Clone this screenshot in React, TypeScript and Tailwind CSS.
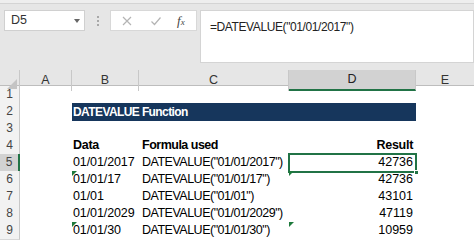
import React from "react";

const cols = "grid grid-cols-[20px_52px_67px_150px_127px_58px]";

function Tri() {
  return (
    <span className="absolute left-0 top-0 w-0 h-0 border-t-[5px] border-t-[#1e7a3c] border-r-[5px] border-r-transparent" />
  );
}

type Row = {
  n: number;
  b?: string;
  c?: string;
  d?: string;
  bold?: boolean;
  triB?: boolean;
  triD?: boolean;
  sel?: boolean;
  title?: boolean;
};

const rows: Row[] = [
  { n: 1 },
  { n: 2, title: true },
  { n: 3 },
  { n: 4, b: "Data", c: "Formula used", d: "Result", bold: true },
  { n: 5, b: "01/01/2017", c: 'DATEVALUE("01/01/2017")', d: "42736", sel: true },
  { n: 6, b: "01/01/17", c: 'DATEVALUE("01/01/17")', d: "42736", triB: true, triD: true },
  { n: 7, b: "01/01", c: 'DATEVALUE("01/01")', d: "43101" },
  { n: 8, b: "01/01/2029", c: 'DATEVALUE("01/01/2029")', d: "47119" },
  { n: 9, b: "01/01/30", c: 'DATEVALUE("01/01/30")', d: "10959", triB: true, triD: true },
];

export default function App() {
  return (
    <div
      className="w-[474px] h-[241px] overflow-hidden bg-white text-black"
      style={{ fontFamily: '"Liberation Sans", Arial, sans-serif' }}
    >
      {/* formula bar area */}
      <div className="h-[70px] bg-[#e6e6e6] flex flex-col">
        <div className="h-[4px] bg-[#eeeeee] border-b border-[#d4d4d4]" />
        <div className="flex items-start pt-[6px]">
          <div className="ml-[4px] w-[81px] h-[21px] bg-white border border-[#d0d0d0] flex items-center justify-between pl-[6px] pr-[4px]">
            <span className="text-[12.5px] text-[#333]">D5</span>
            <span className="w-0 h-0 border-l-[3px] border-r-[3px] border-t-[4px] border-l-transparent border-r-transparent border-t-[#666]" />
          </div>
          <div className="w-[25px] h-[21px] flex flex-col items-center justify-center gap-[2px]">
            <span className="w-[2px] h-[2px] bg-[#a8a8a8]" />
            <span className="w-[2px] h-[2px] bg-[#a8a8a8]" />
            <span className="w-[2px] h-[2px] bg-[#a8a8a8]" />
          </div>
          <div className="w-[87px] h-[21px] bg-white border border-[#d8d8d8] flex items-center">
            <svg width="12" height="12" viewBox="0 0 12 12" className="ml-[10px]">
              <path d="M2 2 L10 10 M10 2 L2 10" stroke="#b4b4b4" strokeWidth="1.2" fill="none" />
            </svg>
            <svg width="12" height="12" viewBox="0 0 12 12" className="ml-[17px]">
              <path d="M1.5 6.5 L4.5 9.5 L10.5 2.5" stroke="#b4b4b4" strokeWidth="1.2" fill="none" />
            </svg>
            <span
              className="ml-[15px] text-[13px] italic text-[#444] leading-none"
              style={{ fontFamily: '"Liberation Serif", "Times New Roman", serif' }}
            >
              f<span className="text-[9px]">x</span>
            </span>
          </div>
          <div className="ml-[3px] flex-1 h-[53px] bg-white border border-[#d4d4d4] pl-[9px] pt-[3px]">
            <span className="text-[12px] text-[#222] tracking-[-0.4px]">=DATEVALUE("01/01/2017")</span>
          </div>
        </div>
      </div>

      {/* column headers */}
      <div className={`${cols} h-[16px] bg-[#e6e6e6] border-b border-[#bdbdbd] text-[12.5px] text-[#333]`}>
        <div className="relative border-r border-[#c8c8c8]">
          <span className="absolute right-[2px] bottom-[2px] w-0 h-0 border-b-[10px] border-b-[#c4c4c4] border-l-[10px] border-l-transparent" />
        </div>
        <div className="flex items-center justify-center border-r border-[#c8c8c8]">A</div>
        <div className="flex items-center justify-center border-r border-[#c8c8c8]">B</div>
        <div className="flex items-center justify-center border-r border-[#c8c8c8]">C</div>
        <div className="flex items-center justify-center bg-[#d2d2d2] border-r border-[#c8c8c8] border-b-2 border-b-[#217346] text-[#222]">D</div>
        <div className="flex items-center justify-center">E</div>
      </div>

      {/* rows */}
      {rows.map((r) => (
        <div key={r.n} className={`${cols} h-[17px] text-[12.5px] leading-[17px]`}>
          <div
            className={`text-center text-[12px] text-[#444] border-b border-[#d8d8d8] ${
              r.sel ? "bg-[#d2d2d2] border-r-2 border-r-[#217346]" : "bg-[#f2f2f2] border-r border-r-[#c8c8c8]"
            }`}
          >
            {r.n}
          </div>
          <div />
          {r.title ? (
            <div className="col-span-3 bg-[#16365c] text-white text-[12px] font-bold pl-[1px] leading-[18px] tracking-[-0.6px]">
              DATEVALUE Function
            </div>
          ) : (
            <>
              <div className={`relative pl-[1px] whitespace-nowrap ${r.bold ? "font-bold tracking-[-0.3px]" : "tracking-[-0.1px]"}`}>
                {r.triB && <Tri />}
                {r.b}
              </div>
              <div className={`pl-[3px] whitespace-nowrap ${r.bold ? "font-bold tracking-[-0.5px]" : "tracking-[-0.5px]"}`}>{r.c}</div>
              <div className={`relative text-right pr-[3px] ${r.bold ? "font-bold tracking-[-0.3px]" : ""}`}>
                {r.triD && <Tri />}
                {r.sel && (
                  <>
                    <span className="absolute left-[-1px] top-[-1px] right-[-1px] bottom-[-1px] border-2 border-[#217346]" />
                    <span className="absolute right-[-3px] bottom-[-3px] w-[5px] h-[5px] bg-[#217346] border border-white" />
                  </>
                )}
                {r.d}
              </div>
            </>
          )}
          <div />
        </div>
      ))}
    </div>
  );
}
